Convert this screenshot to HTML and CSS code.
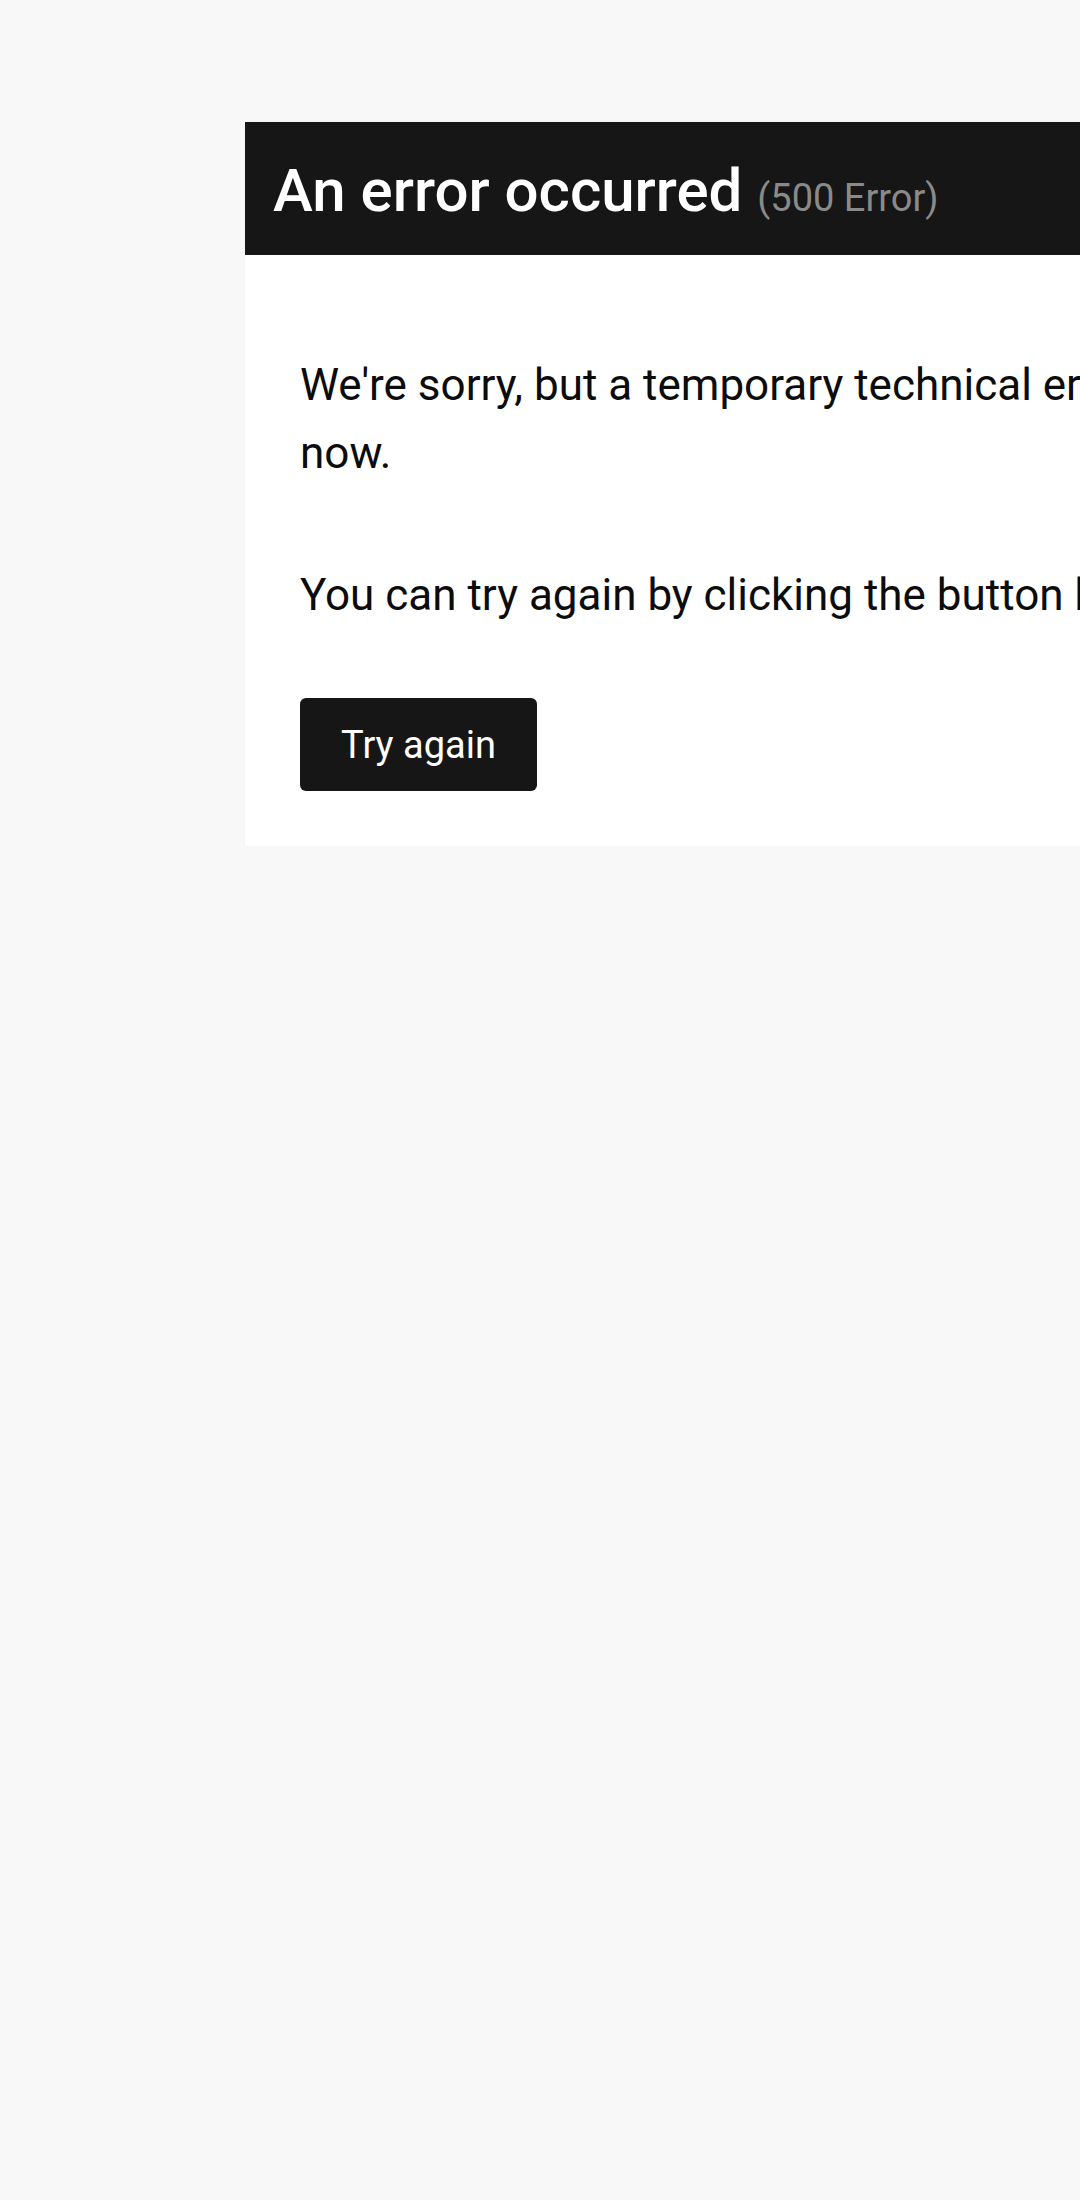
FILE: index.html
```html
<!DOCTYPE html>
<html lang="en">
<head>
<meta charset="utf-8">
<title>An error occurred (500 Error)</title>
<link rel="stylesheet" href="styles.css">
</head>
<body>
<main class="page">
  <section class="card">
    <header class="card-header">
      <h1 class="title">An error occurred <span class="code">(500 Error)</span></h1>
    </header>
    <div class="card-body">
      <p class="message">We're sorry, but a temporary technical error occurred. Please try again<br>now.</p>
      <p class="message second">You can try again by clicking the button below.</p>
      <button class="retry" type="button">Try again</button>
    </div>
  </section>
</main>
</body>
</html>
```

FILE: styles.css
```css
html, body {
  margin: 0;
  padding: 0;
  overflow: hidden;
  background: #f8f8f8;
}

body {
  font-family: Roboto, "Liberation Sans", Arial, sans-serif;
  color: #111111;
  min-height: 2200px;
}

.page {
  padding: 122px 0 0 245px;
}

.card {
  width: 1500px;
  background: #ffffff;
  box-shadow: 0 0 2px rgba(0, 0, 0, 0.04);
}

.card-header {
  background: #161616;
  height: 133px;
  padding: 0 28px;
  display: flex;
  align-items: center;
}

.title {
  margin: 0;
  color: #ffffff;
  font-size: 60px;
  font-weight: 500;
  line-height: 1;
  white-space: nowrap;
  padding-top: 4px;
}

.code {
  color: #8a8a8a;
  font-size: 38px;
  font-weight: 400;
}

.card-body {
  padding: 96px 55px 55px;
}

.message {
  margin: 0;
  font-size: 44px;
  line-height: 68px;
  color: #0c0c0c;
  white-space: nowrap;
}

.second {
  margin-top: 74px;
}

.retry {
  margin-top: 69px;
  display: block;
  background: #161616;
  color: #ffffff;
  border: 0;
  border-radius: 6px;
  font-family: inherit;
  font-size: 38px;
  height: 93px;
  width: 237px;
  padding: 0;
}
```
